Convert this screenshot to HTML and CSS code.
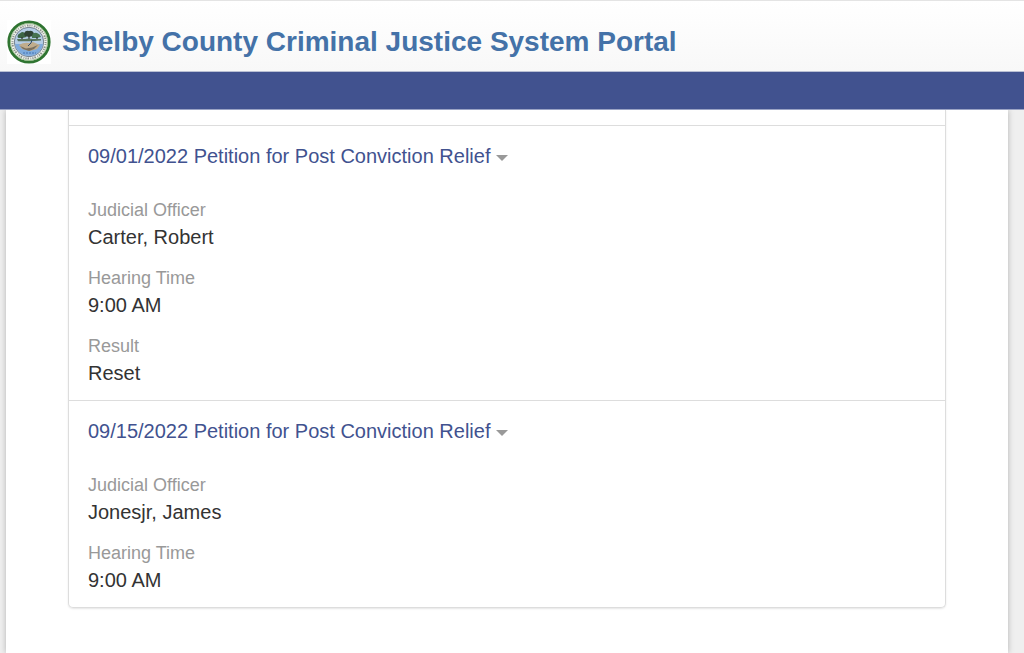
FILE: index.html
```
<!DOCTYPE html>
<html lang="en">
<head>
    <meta charset="UTF-8">
    <meta name="viewport" content="width=device-width, initial-scale=1.0">
    <title>Shelby County Criminal Justice System Portal</title>
    <link rel="stylesheet" href="styles.css">
</head>
<body>
    <header class="site-header">
        <svg class="seal" viewBox="0 0 44 44" aria-hidden="true">
            <rect width="44" height="44" fill="#fff"/>
            <circle cx="22" cy="22" r="20.2" fill="#f1f3ee" stroke="#2f7431" stroke-width="2.8"/>
            <circle cx="22" cy="22" r="18.5" fill="none" stroke="#8db77f" stroke-width="0.8"/>
            <!-- lettering ring -->
            <circle cx="22" cy="22" r="16.6" fill="none" stroke="#8d938c" stroke-width="2" stroke-dasharray="1.2 1.1 0.8 1.5 1.6 0.9"/>
            <circle cx="22" cy="22" r="14.7" fill="#b4cde6" stroke="#5d6875" stroke-width="0.8"/>
            <path d="M8 24h28a14.2 14.2 0 0 1-28 0z" fill="#7fabdc"/>
            <!-- trees -->
            <path d="M10.500 17q0-3 3-4 2-2 4 0 2 1 2 4l-4 1h-4z" fill="#3c6545"/>
            <path d="M17 14q1-4 5-3 4-1 5 3l-1 2-4 1-4-1z" fill="#304335"/>
            <path d="M25 16q1-4 5-3 3 1 4 4l-4 1h-5z" fill="#477351"/>
            <path d="M15 17v3M22 15v6M30 17v3" stroke="#343c35" stroke-width="1.3"/>
            <path d="M10 19h8l4-.5 4 .5h8v1.500l-10 .8H11z" fill="#58735b"/>
            <!-- river bank and boat -->
            <path d="M12 25q5-3 10-2l4-1 7 3-3 4-7 2-8-2z" fill="#c0ac8c"/>
            <path d="M13 26l6 2.500 6-1 6-2.500-4 4-5 2-6-2z" fill="#79705f"/>
            <path d="M21 26l3-3 1-3" fill="none" stroke="#2f4d69" stroke-width="1"/>
            <path d="M16 33h13" stroke="#4475b4" stroke-width="1.2" stroke-dasharray="2 1"/>
        </svg>
        <h1 class="site-title">Shelby County Criminal Justice System Portal</h1>
    </header>
    <nav class="navbar" aria-label="Main"></nav>

    <main class="page">
        <div class="panel">
            <section class="event">
                <h2 class="event-title">
                    <a href="#">09/01/2022 Petition for Post Conviction Relief<span class="caret"></span></a>
                </h2>
                <dl class="details">
                    <div class="detail">
                        <dt>Judicial Officer</dt>
                        <dd>Carter, Robert</dd>
                    </div>
                    <div class="detail">
                        <dt>Hearing Time</dt>
                        <dd>9:00 AM</dd>
                    </div>
                    <div class="detail">
                        <dt>Result</dt>
                        <dd>Reset</dd>
                    </div>
                </dl>
            </section>
            <section class="event">
                <h2 class="event-title">
                    <a href="#">09/15/2022 Petition for Post Conviction Relief<span class="caret"></span></a>
                </h2>
                <dl class="details">
                    <div class="detail">
                        <dt>Judicial Officer</dt>
                        <dd>Jonesjr, James</dd>
                    </div>
                    <div class="detail">
                        <dt>Hearing Time</dt>
                        <dd>9:00 AM</dd>
                    </div>
                </dl>
            </section>
        </div>
    </main>
</body>
</html>
```
FILE: styles.css
```
* {
    box-sizing: border-box;
}

body {
    display: flex;
    flex-direction: column;
    min-height: 100vh;
    margin: 0;
    background: #efefef;
    color: #333;
    font-family: "Liberation Sans", Arial, sans-serif;
    font-size: 20px;
}

/* Header */
.site-header {
    display: flex;
    align-items: center;
    gap: 11px;
    padding: 19px 7px 7px;
    border-top: 1px solid #e4e4e4;
    border-bottom: 1px solid #b9bfd3;
    background: linear-gradient(#fff, #f8f8f8);
}

.seal {
    flex: none;
    width: 44px;
    height: 44px;
}

.site-title {
    margin: 0;
    color: #4472a8;
    font-size: 28px;
    line-height: 44px;
}

.navbar {
    height: 38px;
    background: #41528f;
    border-bottom: 1px solid #9aa3c4;
}

/* Page */
.page {
    flex: 1;
    margin: 0 16px 0 6px;
    padding: 0 62px 44px;
    background: #fff;
    box-shadow: 0 0 6px rgba(0, 0, 0, 0.25);
    clip-path: inset(0 -10px);
}

.panel {
    padding-top: 15px;
    border: 1px solid #ddd;
    border-top: none;
    border-radius: 0 0 5px 5px;
    box-shadow: 0 1px 2px rgba(0, 0, 0, 0.1);
}

.event {
    padding: 16px 19px 13px;
    border-top: 1px solid #ddd;
}

.event-title {
    margin: 0 0 27px;
    font-size: 20px;
    font-weight: normal;
    line-height: 28px;
}

.event-title a {
    color: #41528f;
    text-decoration: none;
}

.event-title a:hover {
    text-decoration: underline;
}

.caret {
    display: inline-block;
    margin-left: 6px;
    border-top: 6px solid #999;
    border-right: 6px solid transparent;
    border-left: 6px solid transparent;
    vertical-align: middle;
}

.details {
    display: flex;
    flex-direction: column;
    gap: 14px;
    margin: 0;
    line-height: 27px;
}

.detail dt {
    color: #999;
    font-size: 18px;
}

.detail dd {
    margin: 0;
}
```
